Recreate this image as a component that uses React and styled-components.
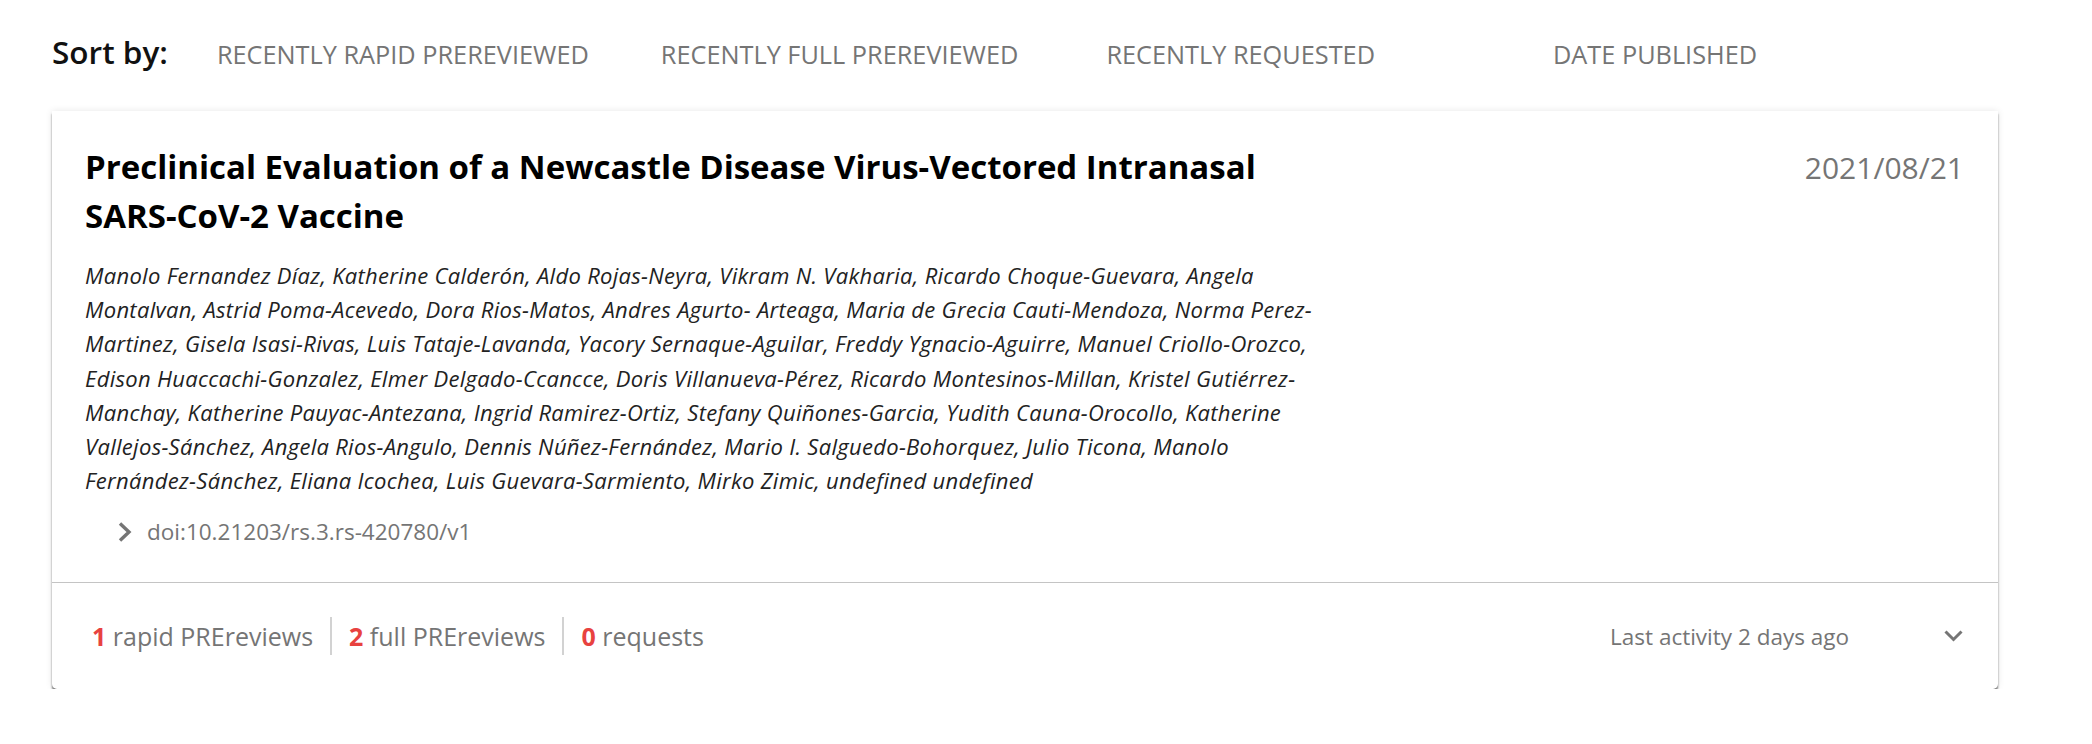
import React from 'react';
import styled, { createGlobalStyle } from 'styled-components';

const authors = "Manolo Fernandez Díaz, Katherine Calderón, Aldo Rojas-Neyra, Vikram N. Vakharia, Ricardo Choque-Guevara, Angela Montalvan, Astrid Poma-Acevedo, Dora Rios-Matos, Andres Agurto- Arteaga, Maria de Grecia Cauti-Mendoza, Norma Perez-Martinez, Gisela Isasi-Rivas, Luis Tataje-Lavanda, Yacory Sernaque-Aguilar, Freddy Ygnacio-Aguirre, Manuel Criollo-Orozco, Edison Huaccachi-Gonzalez, Elmer Delgado-Ccancce, Doris Villanueva-Pérez, Ricardo Montesinos-Millan, Kristel Gutiérrez-Manchay, Katherine Pauyac-Antezana, Ingrid Ramirez-Ortiz, Stefany Quiñones-Garcia, Yudith Cauna-Orocollo, Katherine Vallejos-Sánchez, Angela Rios-Angulo, Dennis Núñez-Fernández, Mario I. Salguedo-Bohorquez, Julio Ticona, Manolo Fernández-Sánchez, Eliana Icochea, Luis Guevara-Sarmiento, Mirko Zimic, undefined undefined";

const sortOptions = [
  { label: 'RECENTLY RAPID PREREVIEWED', gap: 49 },
  { label: 'RECENTLY FULL PREREVIEWED', gap: 72 },
  { label: 'RECENTLY REQUESTED', gap: 88 },
  { label: 'DATE PUBLISHED', gap: 178 },
];

const counts = [
  { n: 1, label: 'rapid PREreviews' },
  { n: 2, label: 'full PREreviews' },
  { n: 0, label: 'requests' },
];

const App = () => {
  return (
    <Page>
      <GlobalStyle />
      <SortBar>
        <SortLabel>Sort by:</SortLabel>
        {sortOptions.map((o) => (
          <SortOption key={o.label} $gap={o.gap}>{o.label}</SortOption>
        ))}
      </SortBar>

      <Card>
        <CardBody>
          <TitleRow>
            <Title>Preclinical Evaluation of a Newcastle Disease Virus-Vectored Intranasal SARS-CoV-2 Vaccine</Title>
            <PubDate>2021/08/21</PubDate>
          </TitleRow>
          <Authors>{authors}</Authors>
          <DoiRow>
            <svg width="16" height="22" viewBox="0 0 16 22">
              <path d="M3 2.5 L12 11 L3 19.5" fill="none" stroke="#757575" strokeWidth="3.4" />
            </svg>
            <DoiText>doi:10.21203/rs.3.rs-420780/v1</DoiText>
          </DoiRow>
        </CardBody>

        <CardFooter>
          <Counts>
            {counts.map((c) => (
              <Count key={c.label}>
                <CountNum>{c.n}</CountNum> {c.label}
              </Count>
            ))}
          </Counts>
          <Activity>
            <ActivityText>Last activity 2 days ago</ActivityText>
            <svg width="19" height="12" viewBox="0 0 19 12">
              <path d="M1.5 1.5 L9.5 9.5 L17.5 1.5" fill="none" stroke="#757575" strokeWidth="3" />
            </svg>
          </Activity>
        </CardFooter>
      </Card>
    </Page>
  );
};

const GlobalStyle = createGlobalStyle`
  body {
    margin: 0;
    background: #ffffff;
    font-family: "Open Sans", "Noto Sans", sans-serif;
  }
`;

const Page = styled.div`
  padding: 30px 94px 0 52px;
`;

const SortBar = styled.div`
  display: flex;
  align-items: baseline;
`;

const SortLabel = styled.span`
  font-size: 31.5px;
  font-weight: 600;
  color: #111;
`;

const SortOption = styled.button`
  margin-left: ${(p) => p.$gap}px;
  padding: 0;
  border: none;
  background: none;
  font-family: inherit;
  font-size: 25.3px;
  color: #757575;
  cursor: pointer;
`;

const Card = styled.div`
  margin-top: 38px;
  background: #fff;
  border-radius: 0 0 5px 5px;
  box-shadow: 0 0 7px rgba(0, 0, 0, 0.1), 0 3px 2px 0 rgba(0, 0, 0, 0.5);
`;

const CardBody = styled.div`
  padding: 31px 34px 35px 33px;
  border-bottom: 1px solid #c4c4c4;
`;

const TitleRow = styled.div`
  display: flex;
  justify-content: space-between;
  align-items: baseline;
`;

const Title = styled.h2`
  margin: 0;
  max-width: 1240px;
  font-size: 33px;
  line-height: 49px;
  font-weight: 700;
  color: #000;
`;

const PubDate = styled.span`
  font-size: 30px;
  color: #757575;
`;

const Authors = styled.p`
  margin: 18px 0 0;
  max-width: 1245px;
  font-size: 22px;
  line-height: 34.2px;
  letter-spacing: 0.3px;
  font-style: italic;
  color: #222;
`;

const DoiRow = styled.div`
  display: flex;
  align-items: center;
  gap: 14px;
  margin-top: 19px;
  padding-left: 32px;
`;

const DoiText = styled.span`
  font-size: 22.5px;
  color: #757575;
`;

const CardFooter = styled.div`
  height: 106px;
  padding: 0 35px 0 40px;
  display: flex;
  align-items: center;
  justify-content: space-between;
`;

const Counts = styled.div`
  display: flex;
  align-items: center;
`;

const Count = styled.span`
  font-size: 25px;
  color: #757575;
  padding: 0 17px;
  border-left: 2px solid #d2d2d2;
  line-height: 38px;

  &:first-child {
    padding-left: 0;
    border-left: none;
  }
`;

const CountNum = styled.b`
  color: #e8423f;
  font-weight: 700;
`;

const Activity = styled.div`
  display: flex;
  align-items: center;
  gap: 95px;
`;

const ActivityText = styled.span`
  font-size: 22.5px;
  color: #757575;
`;

export default App;
